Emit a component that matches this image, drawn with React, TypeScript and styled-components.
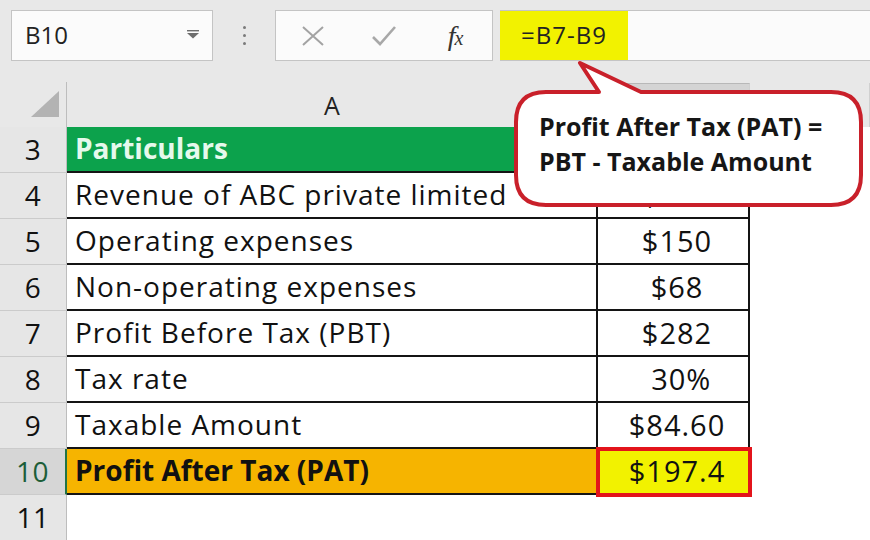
import React from "react";
import styled, { createGlobalStyle } from "styled-components";

const GlobalStyle = createGlobalStyle`
  html, body { margin: 0; padding: 0; background: #e8e8e8; overflow: hidden; }
  * { box-sizing: border-box; }
`;

const Page = styled.div`
  position: relative;
  width: 870px;
  height: 540px;
  overflow: hidden;
  background: #e8e8e8;
  font-family: "Open Sans", sans-serif;
`;

const Toolbar = styled.div`
  display: flex;
  align-items: flex-start;
  height: 81px;
  padding: 10px 0 0 11px;
`;

const NameBox = styled.div`
  display: flex;
  align-items: center;
  justify-content: space-between;
  width: 202px;
  height: 51px;
  padding: 0 12px 2px 13px;
  background: #fbfbfb;
  border: 1px solid #c4c4c4;
  font-family: "Open Sans", sans-serif;
  font-size: 24px;
  color: #222;
`;

const Dots = styled.div`
  width: 62px;
  height: 51px;
  display: flex;
  flex-direction: column;
  align-items: center;
  justify-content: center;
  gap: 5px;
  span {
    width: 3px;
    height: 3px;
    border-radius: 50%;
    background: #7a7a7a;
  }
`;

const ButtonsBox = styled.div`
  display: flex;
  align-items: center;
  width: 218px;
  height: 51px;
  background: #fbfbfb;
  border: 1px solid #c4c4c4;
`;

const IconSlot = styled.div<{ $w: number }>`
  width: ${(p) => p.$w}px;
  height: 100%;
  display: flex;
  align-items: center;
  justify-content: center;
`;

const Fx = styled.span`
  font-family: "Liberation Serif", serif;
  font-style: italic;
  font-size: 28px;
  color: #333;
  letter-spacing: -1px;
  small {
    font-size: 20px;
  }
`;

const FormulaInput = styled.div`
  flex: 1;
  margin-left: 7px;
  height: 51px;
  display: flex;
  background: #fbfbfb;
  border-top: 1px solid #c4c4c4;
  border-bottom: 1px solid #c4c4c4;
`;

const FormulaText = styled.div`
  width: 128px;
  height: 100%;
  display: flex;
  align-items: center;
  padding: 0 0 2px 21px;
  background: #f2f200;
  font-family: "Open Sans", sans-serif;
  font-size: 24px;
  letter-spacing: 1px;
  color: #222;
`;

const Grid = styled.div`
  display: grid;
  grid-template-columns: 67px 531px 152px 1fr;
  grid-auto-rows: 46px;
`;

const Corner = styled.div`
  border-right: 1px solid #bdbdbd;
  margin-top: 1px;
  svg { display: block; }
`;

const ColHead = styled.div<{ $sel?: boolean }>`
  display: flex;
  align-items: center;
  justify-content: center;
  margin-top: 2px;
  background: ${(p) => (p.$sel ? "#d4d4d4" : "#e8e8e8")};
  border-top: ${(p) => (p.$sel ? "1px solid #b8b8b8" : "none")};
  border-right: 1px solid #d0d0d0;
  font-family: "Open Sans", sans-serif;
  font-size: 25px;
  color: #222;
`;

const RowHead = styled.div<{ $sel?: boolean }>`
  display: flex;
  align-items: center;
  justify-content: center;
  padding-bottom: 2px;
  background: ${(p) => (p.$sel ? "#d6d6d6" : "#e6e6e6")};
  border-bottom: 1px solid #cbcbcb;
  border-right: ${(p) => (p.$sel ? "2px solid #217346" : "1px solid #bdbdbd")};
  font-family: "Open Sans", sans-serif;
  font-size: 28px;
  letter-spacing: 0.5px;
  color: ${(p) => (p.$sel ? "#1d5e39" : "#111")};
`;

type Tone = "plain" | "green" | "orange" | "yellow";

const toneBg: Record<Tone, string> = {
  plain: "#ffffff",
  green: "#0ca24c",
  orange: "#f6b400",
  yellow: "#f2f200",
};

const Cell = styled.div<{ $tone: Tone; $center?: boolean; $bold?: boolean }>`
  display: flex;
  align-items: center;
  justify-content: ${(p) => (p.$center ? "center" : "flex-start")};
  padding: 0 0 2px 8px;
  background: ${(p) => toneBg[p.$tone]};
  border-right: 2px solid #141414;
  border-bottom: 2px solid #141414;
  font-family: "Open Sans", sans-serif;
  font-size: ${(p) => (p.$center ? 29 : 28)}px;
  font-weight: ${(p) => (p.$bold ? 700 : 400)};
  letter-spacing: ${(p) => (p.$bold ? 0 : 1)}px;
  color: ${(p) => (p.$tone === "green" ? "#e6f9ec" : "#111")};
  white-space: nowrap;
`;

const ResultCell = styled(Cell)`
  position: relative;
  outline: 4px solid #e3141b;
  outline-offset: -2px;
  z-index: 1;
`;

const Blank = styled.div`
  background: #ffffff;
`;

const Callout = styled.div`
  position: absolute;
  left: 510px;
  top: 58px;
  width: 358px;
  height: 152px;
  svg {
    position: absolute;
    inset: 0;
  }
`;

const CalloutText = styled.div`
  position: absolute;
  left: 29px;
  top: 51px;
  font-family: "Open Sans", sans-serif;
  font-weight: 700;
  font-size: 25px;
  line-height: 35px;
  color: #161616;
  white-space: nowrap;
`;

const rows: { n: number; label: string; value: string; tone?: Tone; bold?: boolean }[] = [
  { n: 3, label: "Particulars", value: "", tone: "green", bold: true },
  { n: 4, label: "Revenue of ABC private limited", value: "$500" },
  { n: 5, label: "Operating expenses", value: "$150" },
  { n: 6, label: "Non-operating expenses", value: "$68" },
  { n: 7, label: "Profit Before Tax (PBT)", value: "$282" },
  { n: 8, label: "Tax rate", value: "\u00a030%" },
  { n: 9, label: "Taxable Amount", value: "$84.60" },
];

export default function App() {
  return (
    <Page>
      <GlobalStyle />
      <Toolbar>
        <NameBox>
          <span>B10</span>
          <svg width="14" height="9" viewBox="0 0 14 9">
            <rect x="1" y="0" width="12" height="1.4" fill="#6d6d6d" />
            <path d="M1 3 L13 3 L7 8.5 Z" fill="#6d6d6d" />
          </svg>
        </NameBox>
        <Dots>
          <span />
          <span />
          <span />
        </Dots>
        <ButtonsBox>
          <IconSlot $w={74}>
            <svg width="24" height="20" viewBox="0 0 24 20">
              <path d="M2 1 L22 19 M22 1 L2 19" stroke="#a3a3a3" strokeWidth="2" fill="none" />
            </svg>
          </IconSlot>
          <IconSlot $w={68}>
            <svg width="26" height="22" viewBox="0 0 26 22">
              <path d="M2 12 L9 19 L24 2" stroke="#a8a8a8" strokeWidth="2.6" fill="none" />
            </svg>
          </IconSlot>
          <IconSlot $w={74}>
            <Fx>
              f<small>x</small>
            </Fx>
          </IconSlot>
        </ButtonsBox>
        <FormulaInput>
          <FormulaText>=B7-B9</FormulaText>
        </FormulaInput>
      </Toolbar>

      <Grid>
        <Corner>
          <svg width="66" height="45" viewBox="0 0 66 45">
            <path d="M31 35 L59 35 L59 9 Z" fill="#b3b3b3" />
          </svg>
        </Corner>
        <ColHead>A</ColHead>
        <ColHead $sel />
        <ColHead />

        {rows.map((r) => (
          <React.Fragment key={r.n}>
            <RowHead>{r.n}</RowHead>
            <Cell $tone={r.tone ?? "plain"} $bold={r.bold}>
              {r.label}
            </Cell>
            <Cell $tone={r.tone ?? "plain"} $center>
              {r.value}
            </Cell>
            <Blank />
          </React.Fragment>
        ))}

        <RowHead $sel>10</RowHead>
        <Cell $tone="orange" $bold>
          Profit After Tax (PAT)
        </Cell>
        <ResultCell $tone="yellow" $center>
          $197.4
        </ResultCell>
        <Blank />

        <RowHead>11</RowHead>
        <Blank />
        <Blank />
        <Blank />
      </Grid>

      <Callout>
        <svg width="358" height="152" viewBox="510 58 358 152">
          <path
            d="M546 92 L599 92 L580 63 L641 92 L831 92 Q861 92 861 122 L861 175 Q861 205 831 205 L546 205 Q516 205 516 175 L516 122 Q516 92 546 92 Z"
            fill="#ffffff"
            stroke="#c9202a"
            strokeWidth="4"
            strokeLinejoin="round"
          />
        </svg>
        <CalloutText>
          Profit After Tax (PAT) =
          <br />
          PBT - Taxable Amount
        </CalloutText>
      </Callout>
    </Page>
  );
}
